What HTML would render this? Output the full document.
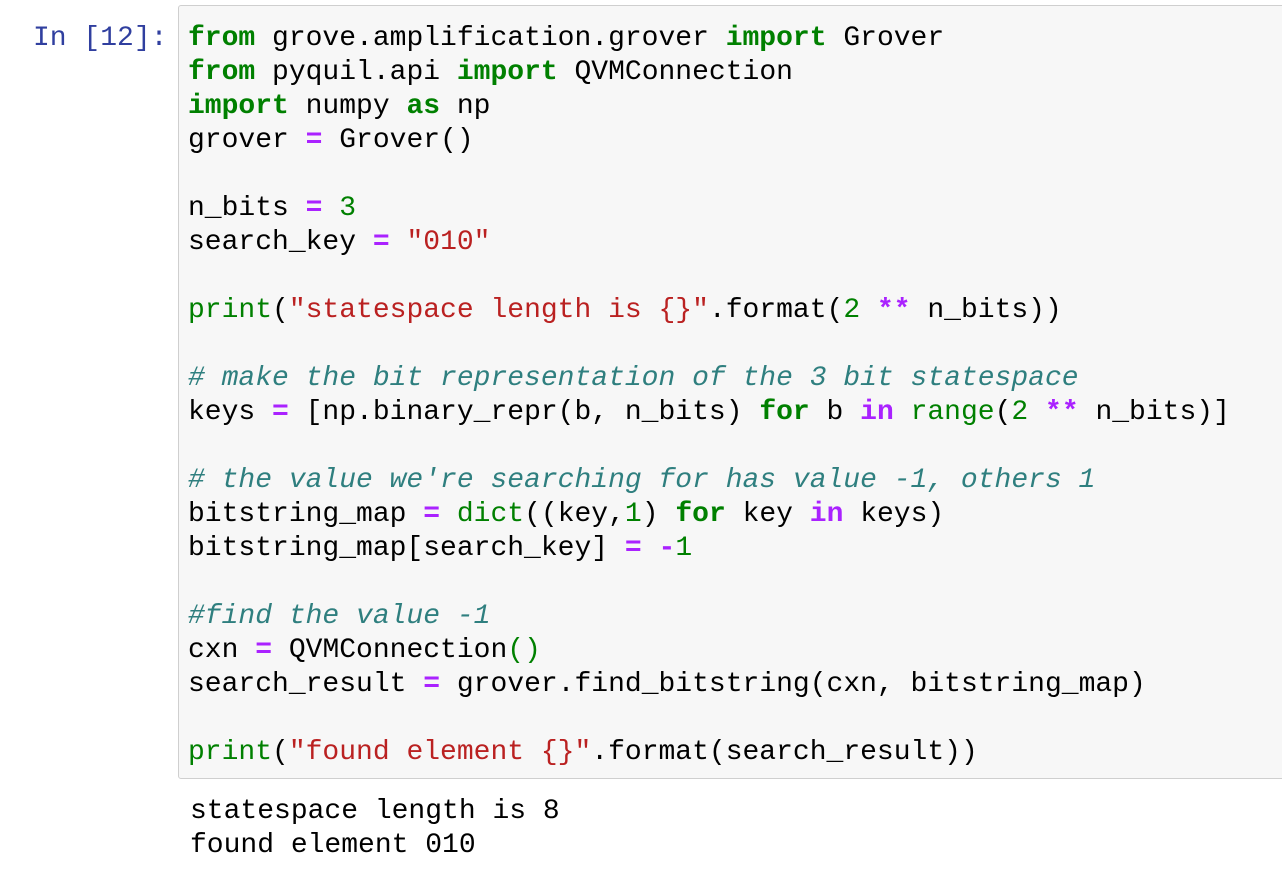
<!DOCTYPE html>
<html><head><meta charset="utf-8"><style>
body{margin:0;background:#fff;width:1282px;height:870px;overflow:hidden;position:relative;font-family:"Liberation Mono",monospace;}
.prompt{position:absolute;left:33px;top:22px;font-size:28px;line-height:34px;color:#303F9F;white-space:pre;}
.box{position:absolute;left:178px;top:5px;width:1110px;height:774px;border:1px solid #cfcfcf;border-radius:3px;background:#f7f7f7;box-sizing:border-box;}
pre{margin:0;font-family:"Liberation Mono",monospace;font-size:28px;line-height:34px;color:#000;white-space:pre;}
.code{position:absolute;left:188px;top:22px;}
.out{position:absolute;left:190px;top:795px;}
.k{color:#008000;font-weight:bold}
.o{color:#AA22FF;font-weight:bold}
.s{color:#BA2121}
.c{color:#2f7f7f;font-style:italic}
.n{color:#008000}
.b{color:#008000}
</style></head><body>
<div class="prompt">In [12]:</div>
<div class="box"></div>
<pre class="code"><span class="k">from</span> grove.amplification.grover <span class="k">import</span> Grover
<span class="k">from</span> pyquil.api <span class="k">import</span> QVMConnection
<span class="k">import</span> numpy <span class="k">as</span> np
grover <span class="o">=</span> Grover()

n_bits <span class="o">=</span> <span class="n">3</span>
search_key <span class="o">=</span> <span class="s">"010"</span>

<span class="b">print</span>(<span class="s">"statespace length is {}"</span>.format(<span class="n">2</span> <span class="o">**</span> n_bits))

<span class="c"># make the bit representation of the 3 bit statespace</span>
keys <span class="o">=</span> [np.binary_repr(b, n_bits) <span class="k">for</span> b <span class="o">in</span> <span class="b">range</span>(<span class="n">2</span> <span class="o">**</span> n_bits)]

<span class="c"># the value we're searching for has value -1, others 1</span>
bitstring_map <span class="o">=</span> <span class="b">dict</span>((key,<span class="n">1</span>) <span class="k">for</span> key <span class="o">in</span> keys)
bitstring_map[search_key] <span class="o">=</span> <span class="o">-</span><span class="n">1</span>

<span class="c">#find the value -1</span>
cxn <span class="o">=</span> QVMConnection<span class="n">()</span>
search_result <span class="o">=</span> grover.find_bitstring(cxn, bitstring_map)

<span class="b">print</span>(<span class="s">"found element {}"</span>.format(search_result))</pre>
<pre class="out">statespace length is 8
found element 010</pre>
</body></html>
